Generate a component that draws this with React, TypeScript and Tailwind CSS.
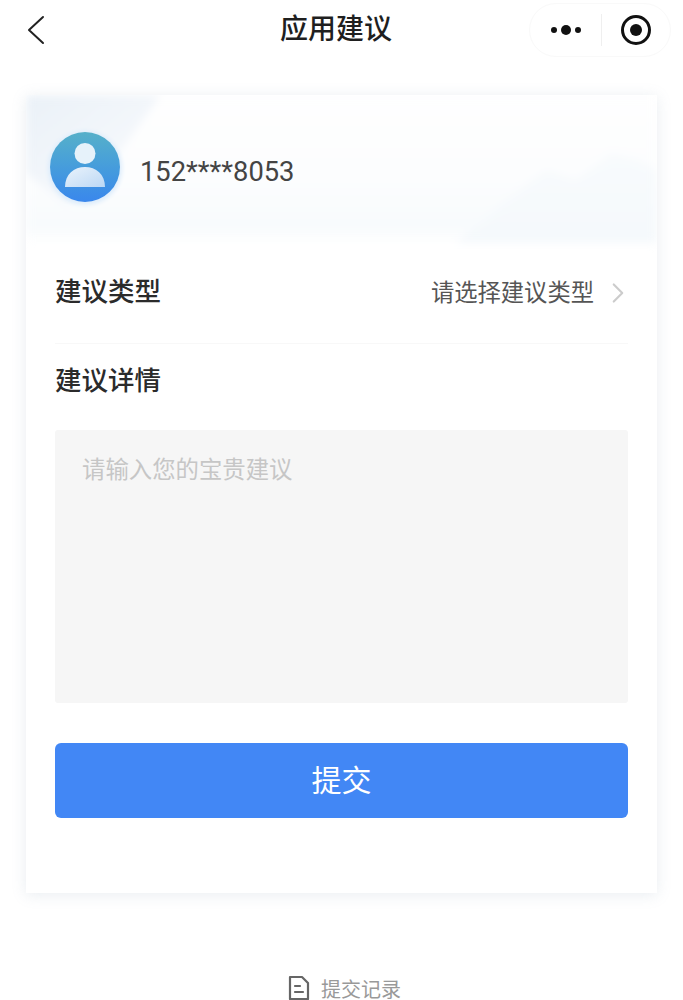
import { ChevronRight } from 'lucide-react';

const FONT = "font-['Liberation_Sans','Noto_Sans_CJK_SC',sans-serif]";

function Avatar() {
  return (
    <div className="w-[70px] h-[70px] rounded-full bg-gradient-to-b from-[#56b0c9] to-[#3a87ec] shadow-[0_1px_4px_2px_#dcecfb] overflow-hidden shrink-0">
      <svg viewBox="0 0 70 70" className="w-full h-full">
        <defs>
          <linearGradient id="body" x1="0" y1="0" x2="1" y2="1">
            <stop offset="0" stopColor="#eaf3fb" />
            <stop offset="1" stopColor="#bcd8f5" />
          </linearGradient>
        </defs>
        <circle cx="35" cy="21.5" r="10.5" fill="#e6f2fa" />
        <path d="M15 55 C15 42 24 35 35 35 C46 35 55 42 55 55 Z" fill="url(#body)" />
      </svg>
    </div>
  );
}

function CardBackdrop() {
  return (
    <svg viewBox="0 0 631 155" preserveAspectRatio="none" className="absolute top-0 left-0 w-full h-[155px] blur-[4px]">
      <defs>
        <linearGradient id="sky" x1="0" y1="0" x2="0" y2="1">
          <stop offset="0" stopColor="#ffffff" />
          <stop offset="0.6" stopColor="#fcfdfe" />
          <stop offset="0.9" stopColor="#f8fbfd" />
          <stop offset="1" stopColor="#ffffff" />
        </linearGradient>
        <linearGradient id="corner" x1="0" y1="0" x2="1" y2="1">
          <stop offset="0" stopColor="#e9f0f7" />
          <stop offset="1" stopColor="#fbfcfe" />
        </linearGradient>
        <linearGradient id="hill" x1="0" y1="0" x2="0" y2="1">
          <stop offset="0" stopColor="#f8fbfd" />
          <stop offset="1" stopColor="#f5f9fc" />
        </linearGradient>
      </defs>
      <rect x="-10" y="-10" width="651" height="158" fill="url(#sky)" />
      <path d="M-10 -10 H142 L70 90 L40 110 L-10 70 Z" fill="url(#corner)" />
      <path d="M430 148 L480 105 L520 75 L550 85 L585 58 L615 65 L641 85 V148 Z" fill="url(#hill)" />
    </svg>
  );
}

export default function App() {
  return (
    <div className={`${FONT} w-[683px] h-[1000px] bg-white flex flex-col overflow-hidden`}>
      {/* Nav bar */}
      <div className="relative h-[60px] flex items-center justify-center shrink-0">
        <svg viewBox="0 0 20 30" className="absolute left-[26px] top-[15px] w-[20px] h-[30px] text-[#222]" fill="none" stroke="currentColor" strokeWidth="2" strokeLinecap="round" strokeLinejoin="round">
          <path d="M17 2 L3 15 L17 28" />
        </svg>
        <h1 className="text-[28px] font-medium text-[#1f1f1f] pr-[11px]">应用建议</h1>
        <div className="absolute right-[12px] top-[3px] w-[142px] h-[54px] rounded-full border border-[#f9f9f9] flex items-center">
          <div className="w-[71px] flex items-center justify-center gap-[4px]">
            <span className="w-[6px] h-[6px] rounded-full bg-[#111]" />
            <span className="w-[10px] h-[10px] rounded-full bg-[#111]" />
            <span className="w-[6px] h-[6px] rounded-full bg-[#111]" />
          </div>
          <div className="w-px h-[32px] bg-[#efefef]" />
          <div className="flex-1 flex items-center justify-center">
            <div className="w-[30px] h-[30px] rounded-full border-[3px] border-[#111] flex items-center justify-center">
              <span className="w-[12px] h-[12px] rounded-full bg-[#111]" />
            </div>
          </div>
        </div>
      </div>

      {/* Card */}
      <div className="relative mt-[35px] mx-[26px] h-[798px] bg-white shadow-[0_2px_14px_rgba(120,140,170,0.16)] overflow-hidden px-[29px] shrink-0">
        <CardBackdrop />
        <div className="relative flex items-center gap-[20px] pt-[37px] -ml-[5px]">
          <Avatar />
          <span className="relative top-[5px] text-[27.3px] text-[#444] font-['Roboto','Noto_Sans_CJK_SC',sans-serif]">152****8053</span>
        </div>

        <div className="relative mt-[46px] h-[96px] pb-[5px] flex items-center justify-between border-b border-[#f8f8f8]">
          <span className="text-[26.5px] font-medium text-[#2b2b2b]">建议类型</span>
          <div className="flex items-center">
            <span className="text-[23.3px] text-[#555]">请选择建议类型</span>
            <ChevronRight className="w-[34px] h-[34px] ml-[7px] -mr-[7px] text-[#cccccc]" strokeWidth={1.5} />
          </div>
        </div>

        <div className="relative mt-[19px] text-[26.5px] font-medium text-[#2b2b2b] leading-[36px]">建议详情</div>

        <div className="mt-[31px] h-[273px] bg-[#f6f6f6] rounded-[3px] px-[27px] py-[24px] text-[23.4px] leading-[32px] text-[#c6c6c6]">
          请输入您的宝贵建议
        </div>

        <button className="mt-[40px] w-full h-[75px] bg-[#4287f5] rounded-[6px] text-white text-[30px] flex items-center justify-center">
          提交
        </button>
      </div>

      {/* Records link */}
      <div className="mt-[80px] pl-[6px] flex items-center justify-center gap-[11px] shrink-0">
        <svg viewBox="0 0 22 26" className="w-[22px] h-[26px] text-[#666]" fill="none" stroke="currentColor" strokeWidth="2.2" strokeLinejoin="round" strokeLinecap="round">
          <path d="M2 2 H14 L20 8 V24 H2 Z" />
          <path d="M7 11 H12 M7 17 H15" />
        </svg>
        <span className="relative top-[2px] text-[20px] text-[#999]">提交记录</span>
      </div>
    </div>
  );
}
